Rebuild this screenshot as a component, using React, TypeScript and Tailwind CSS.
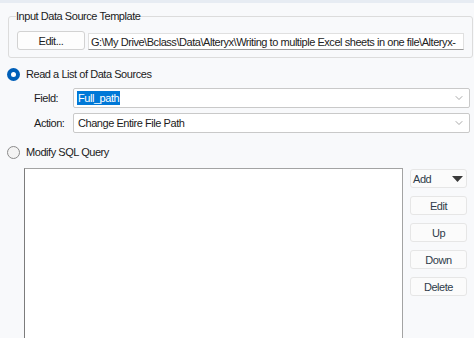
import { ChevronDown } from "lucide-react";

const sideButtons = ["Edit", "Up", "Down", "Delete"];

function Radio({ checked }: { checked: boolean }) {
  return checked ? (
    <div className="w-[13px] h-[13px] rounded-full bg-[#005fb8] flex items-center justify-center">
      <div className="w-[5px] h-[5px] rounded-full bg-white" />
    </div>
  ) : (
    <div className="w-[13px] h-[13px] rounded-full border border-[#8a8a8a] bg-[#f3f3f3]" />
  );
}

function Combo({ children }: { children: React.ReactNode }) {
  return (
    <div className="w-[397px] h-[20px] bg-white border border-[#c9c9c9] rounded-[2px] flex items-center pl-[3px] pr-[4px]">
      <div className="flex-1 flex items-center">{children}</div>
      <ChevronDown className="w-[12px] h-[12px] text-[#8c8c8c]" strokeWidth={1.5} />
    </div>
  );
}

export default function App() {
  return (
    <div
      className="w-[474px] h-[338px] overflow-hidden bg-[#f8f9fb] text-[11px] leading-[14px] tracking-[-0.45px] text-[#1b1b1b]"
      style={{ fontFamily: '"Liberation Sans", Arial, sans-serif' }}
    >
      {/* title strip */}
      <div className="h-[3px] bg-[#e7ecf3]" />

      {/* Input Data Source Template */}
      <fieldset className="ml-[8px] mt-[6px] w-[465px] border border-[#dcdcdc] rounded-[3px] pl-[7px] pb-[7px]">
        <legend className="text-[#1b1b1b]">Input Data Source Template</legend>
        <div className="flex items-end gap-[3px] mt-[8px] ml-[1px]">
          <button className="w-[68px] h-[19px] bg-[#fdfdfd] border border-[#d2d2d2] rounded-[3px] text-center">
            Edit...
          </button>
          <div className="w-[376px] h-[17px] bg-white border border-[#e0e0e0] border-b-[#9a9a9a] flex items-center pl-[2px] overflow-hidden whitespace-nowrap text-[#222]">
            G:\My Drive\Bclass\Data\Alteryx\Writing to multiple Excel sheets in one file\Alteryx-
          </div>
        </div>
      </fieldset>

      {/* Read a List of Data Sources */}
      <div className="mt-[8px] h-[16px] flex items-center pl-[7px] gap-[6px]">
        <Radio checked />
        <span>Read a List of Data Sources</span>
      </div>

      <div className="mt-[6px] flex flex-col gap-[5px]">
        <div className="flex items-center">
          <span className="w-[73px] pl-[34px]">Field:</span>
          <Combo>
            <span className="bg-[#0078d7] text-white px-[1px]">Full_path</span>
          </Combo>
        </div>
        <div className="flex items-center">
          <span className="w-[73px] pl-[34px]">Action:</span>
          <Combo>
            <span className="pl-[1px]">Change Entire File Path</span>
          </Combo>
        </div>
      </div>

      {/* Modify SQL Query */}
      <div className="mt-[11px] h-[16px] flex items-center pl-[7px] gap-[6px]">
        <Radio checked={false} />
        <span>Modify SQL Query</span>
      </div>

      <div className="mt-[8px] flex pl-[24px] gap-[7px]">
        <div className="w-[379px] h-[200px] bg-white border border-[#a3a3a3] border-l-[#7c7c7c]" />
        <div className="w-[57px] mt-[1px] flex flex-col gap-[8px] text-[#2f3b4a]">
          <button className="h-[19px] bg-[#fbfbfb] border border-[#e6e6e6] rounded-[3px] flex items-center justify-between pl-[2px] pr-[3px]">
            <span>Add</span>
            <svg width="11" height="6" viewBox="0 0 11 6">
              <path d="M0 0 L11 0 L5.5 6 Z" fill="#3a3a3a" />
            </svg>
          </button>
          {sideButtons.map((b) => (
            <button
              key={b}
              className="h-[19px] bg-[#fbfbfb] border border-[#e6e6e6] rounded-[3px] text-center"
            >
              {b}
            </button>
          ))}
        </div>
      </div>
    </div>
  );
}
